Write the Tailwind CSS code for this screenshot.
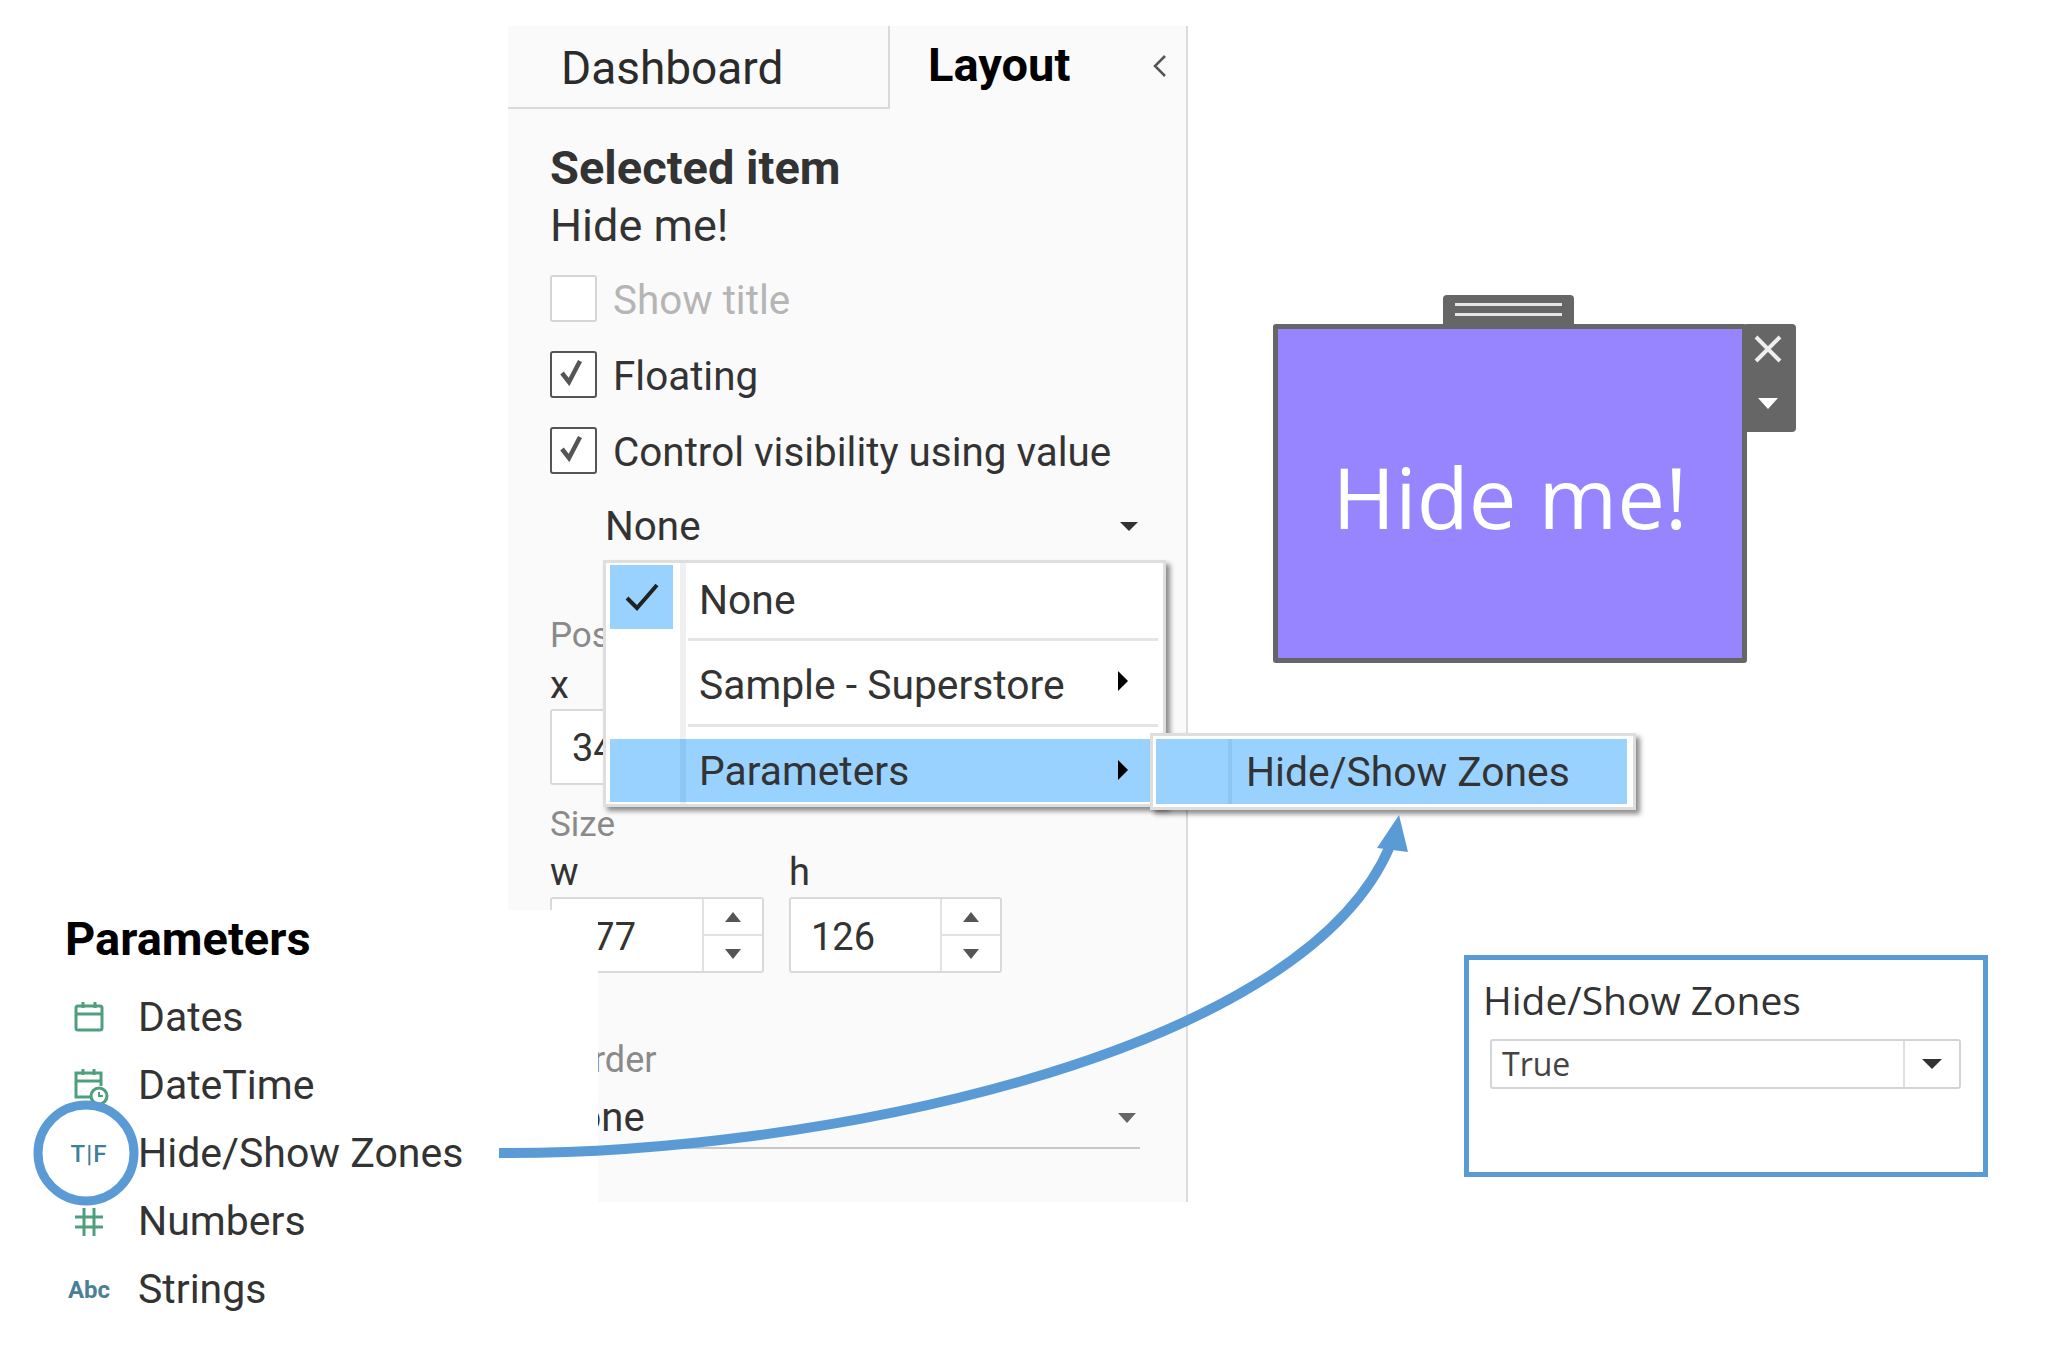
<!DOCTYPE html>
<html lang="en">
<head>
  <meta charset="UTF-8" />
  <title>Hide/Show Zones</title>
  <script src="https://cdn.jsdelivr.net/npm/@tailwindcss/browser@4"></script>
</head>
<body class="relative w-[2048px] h-[1353px] bg-white overflow-hidden font-['Roboto',sans-serif] text-[#333]">

  <!-- Layout panel -->
  <div class="absolute left-[508px] top-[26px] w-[680px] h-[1176px] bg-[#fafafa] border-r-2 border-[#dcdcdc]">
    <div class="flex h-[83px]">
      <div class="w-[382px] border-b-2 border-r-2 border-[#d9d9d9] pl-[53px] pt-[3px] flex items-center text-[46px] text-[#2b2b2b]">Dashboard</div>
      <div class="flex-1 pl-[38px] flex items-center justify-between pr-[18px]">
        <span class="text-[47px] font-bold text-black mb-[4px]">Layout</span>
        <svg class="w-[16px] h-[26px] mb-[4px]" viewBox="0 0 16 26" fill="none" stroke="#555" stroke-width="2.5"><path d="M13 3L3 13L13 23"/></svg>
      </div>
    </div>

    <div class="pl-[42px] pr-[46px] pt-[32px]">
      <div class="h-[54px] flex items-center text-[47px] font-bold">Selected item</div>
      <div class="h-[54px] mt-[4px] flex items-center text-[45px]">Hide me!</div>

      <div class="flex items-center gap-[16px] mt-[22px] h-[47px] text-[40.4px] text-[#b5b5b5]">
        <span class="w-[47px] h-[47px] bg-white border-2 border-[#d5d5d5] rounded-[3px]"></span><span class="pt-[5px]">Show title</span>
      </div>
      <div class="flex items-center gap-[16px] mt-[29px] h-[47px] text-[40.4px]">
        <span class="w-[47px] h-[47px] bg-white border-2 border-[#555] rounded-[3px] flex items-center justify-center">
          <svg class="w-[26px] h-[28px] mb-[6px] mr-[3px]" viewBox="0 0 26 28" fill="none" stroke="#555" stroke-width="4.5"><path d="M3 15L10 24L21 3"/></svg>
        </span><span class="pt-[5px]">Floating</span>
      </div>
      <div class="flex items-center gap-[16px] mt-[29px] h-[47px] text-[40.4px]">
        <span class="w-[47px] h-[47px] bg-white border-2 border-[#555] rounded-[3px] flex items-center justify-center">
          <svg class="w-[26px] h-[28px] mb-[6px] mr-[3px]" viewBox="0 0 26 28" fill="none" stroke="#555" stroke-width="4.5"><path d="M3 15L10 24L21 3"/></svg>
        </span><span class="pt-[5px]">Control visibility using value</span>
      </div>
      <div class="flex items-center justify-between mt-[28px] h-[48px] pl-[55px] pr-[2px] text-[40.4px]">
        <span class="pt-[2px]">None</span>
        <span class="w-0 h-0 border-x-[9px] border-x-transparent border-t-[9px] border-t-[#333]"></span>
      </div>

      <div class="h-[48px] mt-[61px] pt-[2px] flex items-center text-[35px] text-[#8a8a8a]">Position</div>
      <div class="h-[46px] mt-[3px] flex items-center text-[38px]">x</div>
      <div class="w-[213px] h-[76px] mt-[1px] flex items-center pl-[20px] pt-[3px] bg-white border-2 border-[#d9d9d9] rounded-[3px] text-[38px]">344</div>

      <div class="h-[48px] mt-[15px] pt-[2px] flex items-center text-[35px] text-[#8a8a8a]">Size</div>
      <div class="flex gap-[25px]">
        <div class="w-[214px]">
          <div class="h-[48px] flex items-center text-[38px]">w</div>
          <div class="h-[76px] mt-[1px] flex bg-white border-2 border-[#d9d9d9] rounded-[3px] text-[38px]">
            <span class="flex-1 flex items-center pl-[20px] pt-[5px]">377</span>
            <span class="w-[60px] border-l-2 border-[#e2e2e2] flex flex-col">
              <span class="flex-1 flex items-center justify-center border-b-2 border-[#e2e2e2]"><span class="w-0 h-0 border-x-[8px] border-x-transparent border-b-[10px] border-b-[#555]"></span></span>
              <span class="flex-1 flex items-center justify-center"><span class="w-0 h-0 border-x-[8px] border-x-transparent border-t-[10px] border-t-[#555]"></span></span>
            </span>
          </div>
        </div>
        <div class="w-[213px]">
          <div class="h-[48px] flex items-center text-[38px]">h</div>
          <div class="h-[76px] mt-[1px] flex bg-white border-2 border-[#d9d9d9] rounded-[3px] text-[38px]">
            <span class="flex-1 flex items-center pl-[20px] pt-[5px]">126</span>
            <span class="w-[60px] border-l-2 border-[#e2e2e2] flex flex-col">
              <span class="flex-1 flex items-center justify-center border-b-2 border-[#e2e2e2]"><span class="w-0 h-0 border-x-[8px] border-x-transparent border-b-[10px] border-b-[#555]"></span></span>
              <span class="flex-1 flex items-center justify-center"><span class="w-0 h-0 border-x-[8px] border-x-transparent border-t-[10px] border-t-[#555]"></span></span>
            </span>
          </div>
        </div>
      </div>

      <div class="h-[48px] mt-[62px] pt-[2px] flex items-center text-[36px] text-[#8a8a8a]">Border</div>
      <div class="h-[56px] mt-[10px] pb-[4px] flex items-center justify-between border-b-2 border-[#c8c8c8] text-[40px] pr-[2px]">
        None
        <span class="w-0 h-0 border-x-[9px] border-x-transparent border-t-[10px] border-t-[#666] mr-[2px]"></span>
      </div>
    </div>
  </div>

  <!-- Parameters list, sits over the panel corner -->
  <div class="absolute left-0 top-[910px] w-[598px] h-[443px] bg-white pl-[65px] pt-[5px]">
    <div class="h-[48px] flex items-center text-[47px] font-bold text-black">Parameters</div>
    <div class="mt-[21px] flex flex-col text-[41px]">
      <div class="h-[68px] flex items-center">
        <svg class="w-[48px] h-[48px]" viewBox="0 0 48 48" fill="none" stroke="#4f9f7e" stroke-width="3"><rect x="11" y="12" width="26" height="24" rx="2"/><path d="M11 20H37M18 8V14M30 8V14"/></svg>
        <span class="ml-[25px]">Dates</span>
      </div>
      <div class="h-[68px] flex items-center">
        <svg class="w-[48px] h-[48px]" viewBox="0 0 48 48" fill="none" stroke="#4f9f7e" stroke-width="3"><path d="M26 35H11V11H36V24M11 19H36M18 7V13M29 7V13"/><circle cx="34" cy="34" r="8"/><path d="M34 30V34H38" stroke-width="2"/></svg>
        <span class="ml-[25px]">DateTime</span>
      </div>
      <div class="h-[68px] flex items-center">
        <span class="w-[48px] text-center text-[24px] font-medium tracking-[1px] text-[#3f7f97]">T|F</span>
        <span class="ml-[25px]">Hide/Show Zones</span>
      </div>
      <div class="h-[68px] flex items-center">
        <svg class="w-[48px] h-[48px]" viewBox="0 0 48 48" fill="none" stroke="#4f9f7e" stroke-width="3"><path d="M19 10V38M29 10V38M10 19H38M10 29H38"/></svg>
        <span class="ml-[25px]">Numbers</span>
      </div>
      <div class="h-[68px] flex items-center">
        <span class="w-[48px] text-center text-[24px] font-bold text-[#4a7f97] whitespace-nowrap">Abc</span>
        <span class="ml-[25px]">Strings</span>
      </div>
    </div>
  </div>

  <!-- Dropdown menu -->
  <div class="absolute left-[603px] top-[560px] w-[563px] h-[247px] bg-white border-[3px] border-[#dedede] shadow-[4px_4px_5px_rgba(0,0,0,0.45)] text-[40.8px]">
    <div class="absolute left-[4px] top-[2px] w-[63px] h-[64px] bg-[#99d1ff] flex items-center justify-center">
      <svg class="w-[36px] h-[30px]" viewBox="0 0 36 30" fill="none" stroke="#222" stroke-width="4"><path d="M3 16L13 26L33 3"/></svg>
    </div>
    <div class="absolute left-[74px] top-0 bottom-0 w-[6px] bg-[#f0f0f0]"></div>
    <div class="absolute left-[82px] right-[5px] top-[2px] h-[76px] flex items-center pl-[11px] pb-[2px] border-b-[3px] border-[#e4e4e4]">None</div>
    <div class="absolute left-[82px] right-[5px] top-[78px] h-[86px] flex items-center justify-between pl-[11px] pr-[30px] pt-[7px] border-b-[3px] border-[#e4e4e4]">
      Sample - Superstore
      <span class="w-0 h-0 border-y-[10px] border-y-transparent border-l-[10px] border-l-black mb-[10px]"></span>
    </div>
    <div class="absolute left-[4px] right-[-3px] top-[176px] h-[63px] bg-[#99d1ff]">
      <div class="absolute left-[70px] top-0 bottom-0 w-[6px] bg-[#8cc6f5]"></div>
      <div class="h-full flex items-center justify-between pl-[89px] pr-[38px] pt-[3px]">
        Parameters
        <span class="w-0 h-0 border-y-[10px] border-y-transparent border-l-[10px] border-l-black mb-[4px]"></span>
      </div>
    </div>
  </div>

  <!-- Submenu -->
  <div class="absolute left-[1150px] top-[733px] w-[486px] h-[77px] bg-white border-[3px] border-[#dedede] shadow-[4px_4px_5px_rgba(0,0,0,0.45)] p-[3px] text-[40.8px]">
    <div class="relative h-full w-[471px] bg-[#99d1ff] flex items-center pl-[90px] pt-[3px]">
      <div class="absolute left-[72px] top-0 bottom-0 w-[4px] bg-[#8cc6f5]"></div>
      Hide/Show Zones
    </div>
  </div>

  <!-- Floating zone -->
  <div class="absolute left-[1443px] top-[295px] w-[131px] h-[31px] bg-[#666] rounded-t-[4px] pt-[8px] px-[12px] flex flex-col gap-[7px]">
    <div class="h-[3px] bg-[#e6e6e6]"></div>
    <div class="h-[3px] bg-[#e6e6e6]"></div>
  </div>
  <div class="absolute left-[1746px] top-[324px] w-[50px] h-[108px] bg-[#666] rounded-r-[4px] flex flex-col items-center pt-[11px] pr-[6px]">
    <svg class="w-[28px] h-[28px]" viewBox="0 0 28 28" stroke="#eee" stroke-width="4"><path d="M2 2L26 26M26 2L2 26"/></svg>
    <span class="mt-[35px] w-0 h-0 border-x-[10px] border-x-transparent border-t-[11px] border-t-white"></span>
  </div>
  <div class="absolute left-[1273px] top-[324px] w-[474px] h-[339px] bg-[#9785ff] border-[5px] border-[#666] rounded-[3px] flex items-center justify-center pt-[6px] text-white text-[85px] font-medium font-['Open_Sans',sans-serif]">Hide me!</div>

  <!-- Parameter control -->
  <div class="absolute left-[1464px] top-[955px] w-[524px] h-[222px] border-[5px] border-[#5b9bd5] pl-[14px] pr-[22px] pt-[17px]">
    <div class="text-[39px] leading-[46px] font-['Open_Sans',sans-serif] text-[#333]">Hide/Show Zones</div>
    <div class="ml-[7px] mt-[16px] h-[50px] flex bg-white border-2 border-[#d4d4d4] rounded-[3px] text-[32px] font-['Open_Sans',sans-serif]">
      <span class="flex-1 flex items-center pl-[10px] text-[#444]">True</span>
      <span class="w-[56px] border-l-2 border-[#e0e0e0] flex items-center justify-center"><span class="w-0 h-0 border-x-[10px] border-x-transparent border-t-[10px] border-t-[#333]"></span></span>
    </div>
  </div>

  <!-- Callouts -->
  <svg class="absolute left-0 top-0 w-[2048px] h-[1353px] pointer-events-none" viewBox="0 0 2048 1353" fill="none">
    <circle cx="86" cy="1153" r="48" stroke="#5b9bd5" stroke-width="9"/>
    <path d="M499 1153C800 1155 1300 1060 1390 846" stroke="#5b9bd5" stroke-width="10"/>
    <path d="M1399 815L1377 848L1408 852Z" fill="#5b9bd5"/>
  </svg>
</body>
</html>
